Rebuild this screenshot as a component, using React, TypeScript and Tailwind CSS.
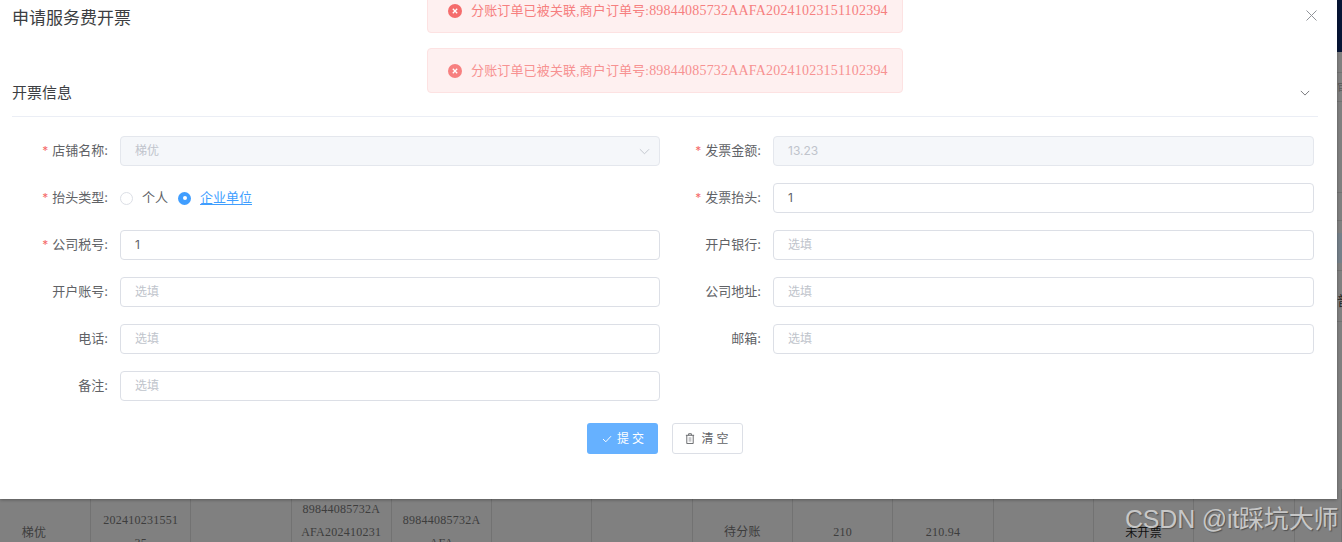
const SANS = "font-['Inter','Noto_Sans_CJK_SC','Noto_Sans',sans-serif]";

function Chevron({ className }: { className: string }) {
  return (
    <svg viewBox="0 0 12 7" fill="none" stroke="currentColor" strokeWidth="1" className={className}>
      <path d="M1 1l5 5 5-5" />
    </svg>
  );
}

function ErrorMessage({ top, faded }: { top: string; faded?: boolean }) {
  return (
    <div className={`absolute left-[427px] w-[476px] h-[45px] flex items-center pl-[20px] rounded-[4px] border border-[#fde2e2] bg-[#fef0f0] ${top}`}>
      <svg viewBox="0 0 14 14" className={`w-[14px] h-[14px] ${faded ? "text-[#f78080]" : "text-[#f56c6c]"}`}>
        <circle cx="7" cy="7" r="7" fill="currentColor" />
        <path d="M4.8 4.8l4.4 4.4M9.2 4.8l-4.4 4.4" stroke="#fff" strokeWidth="1.3" />
      </svg>
      <span className={`ml-[9px] text-[13px] whitespace-nowrap font-['Liberation_Serif','Noto_Sans_CJK_SC',serif] tracking-[0.15px] ${faded ? "text-[#f79292]" : "text-[#f67f7f]"}`}>
        分账订单已被关联,商户订单号:<span className="text-[14px] tracking-[0.19px]">89844085732AAFA20241023151102394</span>
      </span>
    </div>
  );
}

function Label({ text, required }: { text: string; required?: boolean }) {
  return (
    <label className="w-[96px] shrink-0 flex justify-end items-center text-[13px] text-[#606266] whitespace-nowrap">
      {required && <span className="text-[#f56c6c] mr-[4px] text-[12px]">*</span>}
      {text}:
    </label>
  );
}

function Input({ value, placeholder, disabled, select }: { value?: string; placeholder?: string; disabled?: boolean; select?: boolean }) {
  return (
    <div className={`ml-[12px] flex-1 h-[30px] flex items-center justify-between pl-[14px] pr-[9px] rounded-[4px] border border-[#dcdfe6] text-[12px] ${disabled ? "bg-[#f5f7fa] border-[#e4e7ed] text-[#c0c4cc]" : value ? "bg-white text-[#606266]" : "bg-white text-[#c0c4cc]"}`}>
      <span>{value ?? placeholder}</span>
      {select && <Chevron className="w-[11px] h-[7px] text-[#c0c4cc]" />}
    </div>
  );
}

function Field({ label, required, ...rest }: { label: string; required?: boolean; value?: string; placeholder?: string; disabled?: boolean; select?: boolean }) {
  return (
    <div className="flex items-center h-[30px]">
      <Label text={label} required={required} />
      <Input {...rest} />
    </div>
  );
}

function TableCell({ lines, className }: { lines: string[]; className?: string }) {
  return (
    <div className={`flex flex-col items-center justify-center border-r border-[#727272] leading-[23px] ${className ?? ""}`}>
      {lines.map((l, i) => (
        <span key={i}>{l}</span>
      ))}
    </div>
  );
}

const cells: string[][] = [
  ["202410231551", "35"],
  [],
  ["89844085732A", "AFA202410231", "51102394"],
  ["89844085732A", "AFA"],
  [],
  [],
  ["待分账"],
  ["210"],
  ["210.94"],
  [],
];

export default function App() {
  return (
    <div className={`relative w-[1342px] h-[542px] overflow-hidden bg-[#808080] ${SANS}`}>
      {/* page behind the dialog */}
      <div className="h-[52px] bg-[#061536]" />
      <div className="h-[21px] border-b border-[#727272]" />
      <div className="h-[29px] border-b border-[#727272] pl-[1337px] text-[13px] leading-[28px] text-[#5c5c5c] whitespace-nowrap overflow-hidden">审核</div>
      <div className="h-[91px] border-b border-[#727272]" />
      <div className="h-[28px] border-b border-[#727272]" />
      <div className="h-[12px]" />
      <div className="h-[30px] bg-[#75808a]" />
      <div className="h-[8px] border-b border-[#727272]" />
      <div className="h-[51px] border-b border-[#727272] pl-[1337px] text-[13px] leading-[58px] text-[#222222] whitespace-nowrap overflow-hidden">普通</div>
      <div className="h-[167px]" />
      <div className="h-[86px] grid grid-cols-[91px_repeat(12,100.3px)_1fr] text-center text-[12px] tracking-[0.25px] text-[#3d3d3d] font-['Liberation_Serif','Noto_Sans_CJK_SC',serif]">
        <TableCell lines={["梯优"]} className={`pr-[22px] ${SANS}`} />
        {cells.map((c, i) => (
          <TableCell key={i} lines={c} />
        ))}
        <TableCell lines={["未开票"]} className={`text-[#111111] ${SANS}`} />
        <TableCell lines={[]} />
        <TableCell lines={[]} />
      </div>

      {/* dialog */}
      <div className="absolute left-0 top-0 w-[1337px] h-[499px] bg-white shadow-[0_1px_3px_rgba(0,0,0,0.3)] px-[12px]">
        <div className="h-[38px] flex items-center justify-between">
          <span className="text-[17px] text-[#3c3e42]">申请服务费开票</span>
          <svg viewBox="0 0 11 11" fill="none" stroke="#909399" strokeWidth="1" className="w-[11px] h-[11px] mr-[8px] mt-[-8px]">
            <path d="M.5.5l10 10M10.5.5l-10 10" />
          </svg>
        </div>
        <div className="mt-[30px] mr-[7px] h-[49px] pt-[2px] flex items-center justify-between border-b border-[#ebeef5]">
          <span className="text-[15px] text-[#3c3e42]">开票信息</span>
          <Chevron className="w-[10px] h-[6px] mr-[8px] text-[#606266]" />
        </div>
        <div className="mt-[19px] pr-[11px] grid grid-cols-[648px_1fr] gap-x-[5px] gap-y-[17px]">
          <Field label="店铺名称" required value="梯优" disabled select />
          <Field label="发票金额" required value="13.23" disabled />
          <div className="flex items-center h-[30px]">
            <Label text="抬头类型" required />
            <div className="ml-[12px] flex items-center text-[13px]">
              <span className="w-[13px] h-[13px] rounded-full border border-[#dcdfe6] bg-white" />
              <span className="ml-[9px] text-[#606266]">个人</span>
              <span className="ml-[10px] w-[13px] h-[13px] rounded-full bg-[#409eff] flex items-center justify-center">
                <span className="w-[4px] h-[4px] rounded-full bg-white" />
              </span>
              <span className="ml-[9px] text-[#409eff] underline underline-offset-2">企业单位</span>
            </div>
          </div>
          <Field label="发票抬头" required value="1" />
          <Field label="公司税号" required value="1" />
          <Field label="开户银行" placeholder="选填" />
          <Field label="开户账号" placeholder="选填" />
          <Field label="公司地址" placeholder="选填" />
          <Field label="电话" placeholder="选填" />
          <Field label="邮箱" placeholder="选填" />
          <Field label="备注" placeholder="选填" />
        </div>
        <div className="mt-[22px] flex justify-center gap-[14px] pr-[7px]">
          <button className="w-[71px] h-[31px] pl-[4px] rounded-[3px] bg-[#66b1ff] text-white text-[12px] flex items-center justify-center tracking-[3px]">
            <svg viewBox="0 0 12 10" fill="none" stroke="currentColor" strokeWidth="1.2" className="w-[10px] h-[8px] mr-[5px]">
              <path d="M1 5l3.5 3.5L11 1.5" />
            </svg>
            提交
          </button>
          <button className="w-[71px] h-[31px] pl-[2px] rounded-[3px] bg-white border border-[#dcdfe6] text-[#606266] text-[12px] flex items-center justify-center tracking-[3px]">
            <svg viewBox="0 0 10 12" fill="none" stroke="currentColor" strokeWidth="1" className="w-[10px] h-[11px] mr-[6px]">
              <path d="M.5 2.5h9M3.5 2.5V.8h3v1.7M1.5 2.5v9h7v-9" />
              <path d="M3.5 4.5h3v5h-3z" fill="currentColor" fillOpacity="0.35" stroke="none" />
            </svg>
            清空
          </button>
        </div>
      </div>

      <ErrorMessage top="top-[-12px]" />
      <ErrorMessage top="top-[48px]" faded />

      {/* watermark */}
      <span className="absolute left-[1125px] top-[502px] text-[25px] leading-[34px] tracking-[-0.2px] text-[#cfcfcf] opacity-90 whitespace-nowrap [text-shadow:1px_1px_1px_rgba(0,0,0,0.4)] font-['Liberation_Sans','Noto_Sans_CJK_SC',sans-serif]">
        CSDN @it踩坑大师
      </span>
    </div>
  );
}
